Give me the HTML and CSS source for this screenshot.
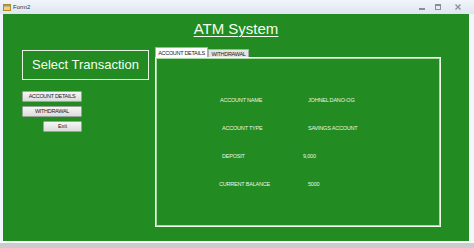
FILE: index.html
```html
<!DOCTYPE html>
<html lang="en">
<head>
<meta charset="utf-8">
<title>Form2</title>
<link rel="stylesheet" href="styles.css">
</head>
<body>
<div class="window">
  <div class="titlebar">
    <svg class="app-icon" width="8" height="8" viewBox="0 0 8 8">
      <rect x="0.5" y="1.5" width="7" height="6" fill="#f2d36b" stroke="#b08a2a" stroke-width="1"/>
      <rect x="1" y="2" width="6" height="1.5" fill="#6f9be0"/>
    </svg>
    <span class="title">Form2</span>
    <div class="controls">
      <svg class="ctl" width="10" height="8" viewBox="0 0 10 8"><rect x="2" y="5" width="6" height="2" fill="#8a8f96"/></svg>
      <svg class="ctl" width="10" height="8" viewBox="0 0 10 8"><rect x="2.5" y="1.5" width="5" height="5" fill="none" stroke="#8a8f96" stroke-width="1"/><rect x="2.5" y="1.5" width="5" height="1.5" fill="#8a8f96"/></svg>
      <svg class="ctl ctl-close" width="10" height="8" viewBox="0 0 10 8"><path d="M2.5 1.5 L7.5 6.5 M7.5 1.5 L2.5 6.5" stroke="#8a8f96" stroke-width="1.3"/></svg>
    </div>
  </div>
  <div class="client">
    <h1 class="heading">ATM System</h1>
    <div class="main">
      <div class="sidebar">
        <div class="select-box">Select Transaction</div>
        <div class="buttons">
          <button class="btn">ACCOUNT DETAILS</button>
          <button class="btn">WITHDRAWAL</button>
          <button class="btn btn-exit">Exit</button>
        </div>
      </div>
      <div class="tabs">
        <div class="tab-strip">
          <div class="tab tab-active">ACCOUNT DETAILS</div>
          <div class="tab">WITHDRAWAL</div>
        </div>
        <div class="tab-panel">
          <div class="info-grid">
            <div class="label">ACCOUNT NAME</div><div class="value">JOHNEL DANO-OG</div>
            <div class="label label-shift">ACCOUNT TYPE</div><div class="value">SAVINGS ACCOUNT</div>
            <div class="label label-shift">DEPOSIT</div><div class="value value-left">9,000</div>
            <div class="label label-wide">CURRENT BALANCE</div><div class="value">5000</div>
          </div>
        </div>
      </div>
    </div>
  </div>
  <div class="frame-bottom"></div>
</div>
</body>
</html>
```

FILE: styles.css
```css
* { box-sizing: border-box; }
html, body { margin: 0; padding: 0; }
body {
  width: 474px;
  height: 248px;
  overflow: hidden;
  font-family: "Liberation Sans", Arial, sans-serif;
  background: #f4f6f9;
}
.window {
  width: 474px;
  height: 248px;
  display: flex;
  flex-direction: column;
  background: #f3f6fa;
}
.titlebar {
  height: 14px;
  display: flex;
  align-items: center;
  padding-left: 3px;
  background: linear-gradient(to bottom, #f2f5f9 0%, #e6ecf4 60%, #dde6f1 100%);
}
.app-icon { display: block; margin-top: -1px; }
.title {
  font-size: 6px;
  color: #2a2f38;
  margin-left: 2px;
  line-height: 8px;
}
.controls {
  margin-left: auto;
  margin-right: 11px;
  display: flex;
  gap: 6px;
  align-items: center;
}
.ctl { display: block; }
.ctl-close { margin-left: 4px; }
.client {
  margin-left: 3px;
  width: 466px;
  height: 227px;
  background: #228b22;
  padding-top: 6px;
}
.heading {
  margin: 0;
  font-weight: normal;
  font-size: 15px;
  line-height: 17px;
  text-align: center;
  color: #f4fff0;
  text-decoration: underline;
  text-underline-offset: 2px;
  text-decoration-thickness: 1px;
  padding-left: 0px;
}
.main {
  display: flex;
  margin-top: 10px;
}
.sidebar {
  margin-left: 19px;
  width: 127px;
  padding-top: 3px;
}
.select-box {
  height: 30px;
  border: 1px solid #e6f5e3;
  color: #f2fff0;
  font-size: 13px;
  line-height: 28px;
  text-align: center;
}
.buttons {
  margin-top: 11px;
  display: flex;
  flex-direction: column;
  align-items: flex-start;
  gap: 4px;
}
.btn {
  width: 60px;
  height: 11px;
  padding: 0;
  margin: 0;
  border: 1px solid #9aa59a;
  border-radius: 1px;
  background: linear-gradient(to bottom, #f6f6f6 0%, #e9e9e9 50%, #dcdcdc 100%);
  font-family: "Liberation Sans", Arial, sans-serif;
  font-size: 5.5px;
  letter-spacing: -0.3px;
  line-height: 9px;
  color: #222;
  text-align: center;
}
.btn-exit {
  width: 39px;
  margin-left: 21px;
  letter-spacing: 0;
}
.tabs {
  margin-left: 6px;
  width: 286px;
}
.tab-strip {
  height: 10px;
  display: flex;
  align-items: flex-end;
}
.tab {
  height: 8px;
  padding: 0 2px;
  width: 41px;
  background: #e4e4e4;
  border: 1px solid #a9b0a9;
  border-bottom: none;
  font-size: 5.5px;
  letter-spacing: -0.3px;
  line-height: 8px;
  color: #222;
  white-space: nowrap;
  text-align: center;
}
.tab-active {
  height: 10px;
  width: 53px;
  background: #ffffff;
  line-height: 10px;
}
.tab-panel {
  height: 170px;
  border: 1px solid #f4fff2;
  box-shadow: inset 0 0 0 1px #a8d8a4;
  padding-top: 38px;
  padding-left: 64px;
}
.info-grid {
  display: grid;
  grid-template-columns: 88px auto;
  grid-auto-rows: 8px;
  row-gap: 20px;
  font-size: 5.5px;
  letter-spacing: -0.2px;
  line-height: 8px;
  color: #e8f6e2;
  white-space: nowrap;
}
.label-shift { padding-left: 2px; }
.label-wide { margin-left: -1px; }
.value-left { margin-left: -5px; }
.frame-bottom {
  flex: 1;
  border-top: 2px solid #fbfcfd;
  background: #c9cbce;
}
```
